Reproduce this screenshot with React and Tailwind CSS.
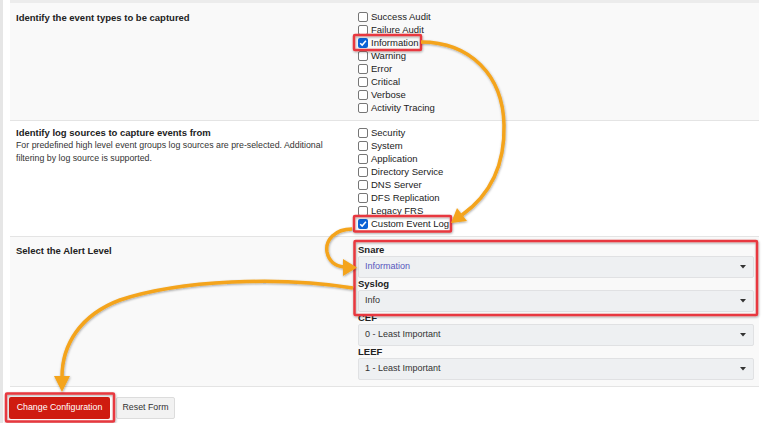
import React from "react";

const font = { fontFamily: '"Liberation Sans", Arial, sans-serif' };

function Box({ checked }) {
  if (checked) {
    return (
      <span className="flex h-[10px] w-[10px] shrink-0 items-center justify-center rounded-[2px] bg-[#0b62d6]">
        <svg width="8" height="8" viewBox="0 0 8 8">
          <path d="M1.2 4.2 L3.2 6.1 L6.9 1.8" fill="none" stroke="#fff" strokeWidth="1.5" />
        </svg>
      </span>
    );
  }
  return <span className="h-[10px] w-[10px] shrink-0 rounded-[2px] border border-[#767676] bg-white" />;
}

function Check({ label, checked }) {
  return (
    <div className="flex h-[13px] items-center gap-[3px] text-[9.5px] leading-[13px] text-[#222]">
      <Box checked={checked} />
      <span>{label}</span>
    </div>
  );
}

function Select({ label, value, blue }) {
  return (
    <div className="flex flex-col">
      <div className="h-[12px] text-[9.5px] leading-[12px] font-bold text-[#222]">{label}</div>
      <div className="flex h-[22px] items-center justify-between rounded-[2px] border border-[#e0e1e3] bg-[#eef0f2] pl-[6px] pr-[7px]">
        <span className={"text-[9px] " + (blue ? "text-[#5656bd]" : "text-[#333]")}>{value}</span>
        <svg width="6" height="4" viewBox="0 0 6 4">
          <path d="M0 0 L6 0 L3 3.5 Z" fill="#333" />
        </svg>
      </div>
    </div>
  );
}

export default function App() {
  const orange = "#f4a41c";
  const red = "#e8393f";
  return (
    <div className="relative flex h-[423px] w-[768px] overflow-hidden bg-white" style={font}>
      <div className="w-[3px] shrink-0 bg-[#e6e6e6]" />
      <div className="flex flex-col pl-[7px]">
        <div className="w-[749px] border-t-[3px] border-[#ececec]">
          {/* Row 1 */}
          <div className="grid grid-cols-[348px_1fr] border-b border-[#e4e4e4] bg-[#f9f9f9] pb-[6px] pt-[7px]">
            <div className="pl-[6px] pt-[1px] text-[9.5px] font-bold leading-[13px] text-[#222]">
              Identify the event types to be captured
            </div>
            <div className="flex flex-col">
              <Check label="Success Audit" />
              <Check label="Failure Audit" />
              <Check label="Information" checked />
              <Check label="Warning" />
              <Check label="Error" />
              <Check label="Critical" />
              <Check label="Verbose" />
              <Check label="Activity Tracing" />
            </div>
          </div>
          {/* Row 2 */}
          <div className="grid grid-cols-[348px_1fr] border-b border-[#e4e4e4] bg-white pb-[6px] pt-[5px]">
            <div className="pl-[6px]">
              <div className="text-[9.5px] font-bold leading-[13px] text-[#222]">
                Identify log sources to capture events from
              </div>
              <div className="pr-[20px] text-[8.8px] leading-[13px] text-[#333]">
                For predefined high level event groups log sources are pre-selected. Additional filtering by log source is supported.
              </div>
            </div>
            <div className="flex flex-col">
              <Check label="Security" />
              <Check label="System" />
              <Check label="Application" />
              <Check label="Directory Service" />
              <Check label="DNS Server" />
              <Check label="DFS Replication" />
              <Check label="Legacy FRS" />
              <Check label="Custom Event Log" checked />
            </div>
          </div>
          {/* Row 3 */}
          <div className="grid grid-cols-[348px_1fr] border-b border-[#e4e4e4] bg-[#f9f9f9] pb-[6px] pr-[5px] pt-[7px]">
            <div className="pl-[6px] text-[9.5px] font-bold leading-[13px] text-[#222]">Select the Alert Level</div>
            <div className="flex flex-col">
              <Select label="Snare" value="Information" blue />
              <Select label="Syslog" value="Info" />
              <Select label="CEF" value="0 - Least Important" />
              <Select label="LEEF" value="1 - Least Important" />
            </div>
          </div>
        </div>
        <div className="mt-[10px] flex gap-[6px] pl-0">
          <button className="flex h-[22px] w-[101px] items-center justify-center rounded-[2px] bg-[#cf1b10] text-[8.8px] text-white -ml-[1px]">
            Change Configuration
          </button>
          <button className="flex h-[22px] w-[59px] items-center justify-center rounded-[2px] border border-[#dcdcdc] bg-[#f2f2f2] text-[8.8px] text-[#333]">
            Reset Form
          </button>
        </div>
      </div>

      <svg className="pointer-events-none absolute inset-0" width="768" height="423" viewBox="0 0 768 423">
        <defs>
          <filter id="sh" x="-20%" y="-20%" width="140%" height="140%">
            <feDropShadow dx="0.5" dy="1" stdDeviation="1" floodColor="#000" floodOpacity="0.35" />
          </filter>
        </defs>
        <g filter="url(#sh)" fill="none" stroke={red} strokeWidth="2.5">
          <rect x="354" y="35" width="67" height="15" rx="1" />
          <rect x="354" y="216" width="97" height="15.5" rx="1" />
          <rect x="354.5" y="241" width="402.5" height="74" rx="1" />
          <rect x="6" y="393.5" width="108" height="28" rx="1" />
        </g>
        <g filter="url(#sh)">
          <path d="M421 42 C470 42 503 75 504 125 C505 165 490 195 462 215" fill="none" stroke={orange} strokeWidth="3.5" />
          <polygon points="451,223 467,221 457,208" fill={orange} />
          <path d="M352 229 C335 229 325 240 327 252 C329 262 336 266 344 267" fill="none" stroke={orange} strokeWidth="3.5" />
          <polygon points="357,267.5 343,259 343,276" fill={orange} />
          <path d="M353 288 C280 276 180 280 120 300 C80 315 62 345 62 377" fill="none" stroke={orange} strokeWidth="3.5" />
          <polygon points="62,392 54,376 70,376" fill={orange} />
        </g>
      </svg>
    </div>
  );
}
